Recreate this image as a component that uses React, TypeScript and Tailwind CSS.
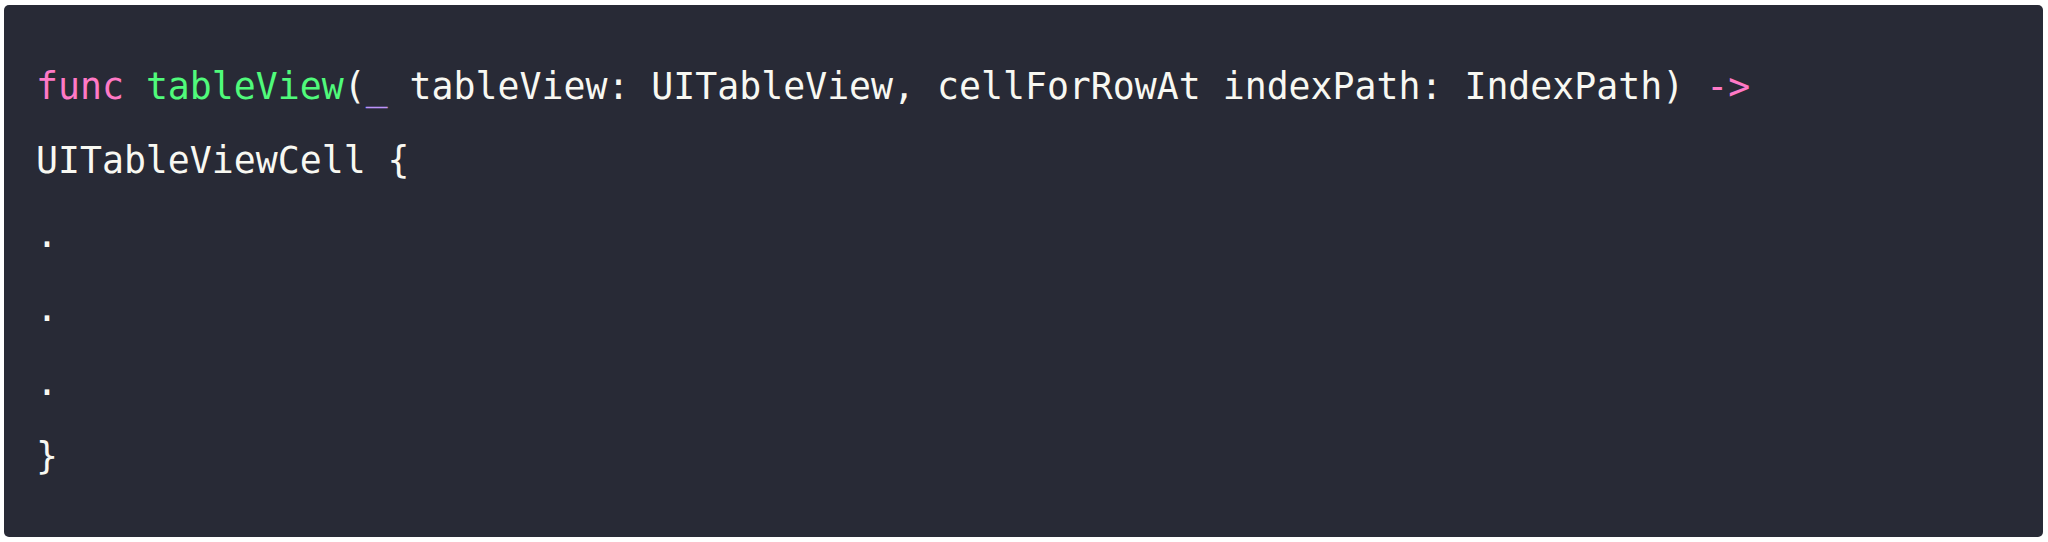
export default function App() {
  const lines: React.ReactNode[] = [
    <>
      <span className="text-[#ff79c6]">func</span> <span className="text-[#50fa7b]">tableView</span>(
      <span className="text-[#bd93f9]">_</span> tableView: UITableView, cellForRowAt indexPath: IndexPath){" "}
      <span className="text-[#ff79c6]">-&gt;</span>
    </>,
    <>UITableViewCell {"{"}</>,
    <>.</>,
    <>.</>,
    <>.</>,
    <>{"}"}</>,
  ];
  return (
    <div className="w-[2048px] h-[542px] bg-white pt-[5px] pl-[4px] pr-[5px]">
      <div
        className="h-[532px] rounded-[5px] bg-[#282a36] pl-[32px] pt-[45px] text-[#f8f8f2] text-[36.5px] leading-[74px] whitespace-pre"
        style={{ fontFamily: '"DejaVu Sans Mono", monospace' }}
      >
        {lines.map((l, i) => (
          <div key={i}>{l}</div>
        ))}
      </div>
    </div>
  );
}
